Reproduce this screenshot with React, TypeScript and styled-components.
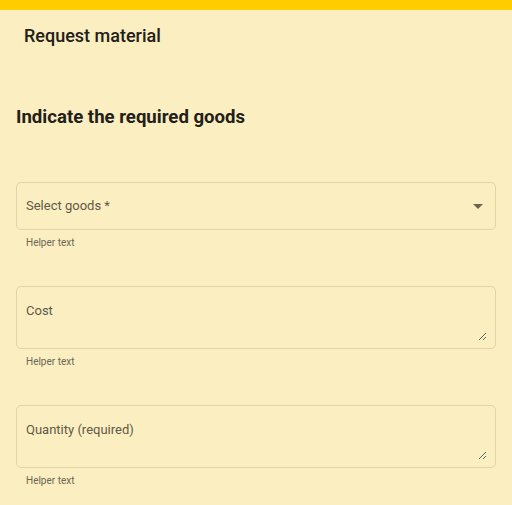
import React from "react";
import styled, { createGlobalStyle } from "styled-components";

const GlobalStyle = createGlobalStyle`
  html, body {
    margin: 0;
    padding: 0;
    background: #fbeec0;
    font-family: Roboto, "Noto Sans", "Liberation Sans", sans-serif;
  }
`;

interface FieldProps {
  label: string;
  helper: string;
}

const SelectField: React.FC<FieldProps> = ({ label, helper }) => (
  <FieldGroup>
    <SelectBox role="button" tabIndex={0}>
      <FieldLabel>{label}</FieldLabel>
      <svg width="10" height="5" viewBox="0 0 10 5">
        <path d="M0 0h10L5 5z" fill="#6b6552" />
      </svg>
    </SelectBox>
    <Helper>{helper}</Helper>
  </FieldGroup>
);

const TextField: React.FC<FieldProps> = ({ label, helper }) => (
  <FieldGroup>
    <TextBox>
      <TextArea placeholder={label} />
    </TextBox>
    <Helper>{helper}</Helper>
  </FieldGroup>
);

export default function App() {
  return (
    <>
      <GlobalStyle />
      <Page>
        <TopBar />
        <Title>Request material</Title>
        <Section>
          <Heading>Indicate the required goods</Heading>
          <Form>
            <SelectField label="Select goods *" helper="Helper text" />
            <TextField label="Cost" helper="Helper text" />
            <TextField label="Quantity (required)" helper="Helper text" />
          </Form>
        </Section>
      </Page>
    </>
  );
}

const Page = styled.div`
  display: flex;
  flex-direction: column;
  min-height: 505px;
  background: #fbeec0;
`;

const TopBar = styled.div`
  height: 10px;
  background: #ffcc00;
`;

const Title = styled.h1`
  margin: 0;
  padding: 14px 24px 0;
  font-size: 18px;
  font-weight: 500;
  line-height: 24px;
  color: #222018;
`;

const Section = styled.section`
  padding: 56px 16px 0;
`;

const Heading = styled.h2`
  margin: 0;
  font-size: 18.6px;
  font-weight: 700;
  line-height: 26px;
  color: #222018;
`;

const Form = styled.div`
  display: flex;
  flex-direction: column;
  gap: 37px;
  margin-top: 52px;
`;

const FieldGroup = styled.div`
  display: flex;
  flex-direction: column;
  gap: 6px;
`;

const SelectBox = styled.div`
  box-sizing: border-box;
  height: 48px;
  display: flex;
  align-items: center;
  justify-content: space-between;
  padding: 0 12px 0 9px;
  border: 1px solid #e1d4a6;
  border-radius: 5px;
  cursor: pointer;
`;

const FieldLabel = styled.span`
  font-size: 13px;
  line-height: 15px;
  margin-top: -2px;
  color: #5f5a48;
`;

const TextBox = styled.div`
  box-sizing: border-box;
  height: 63px;
  display: flex;
  padding: 8px 8px 7px 9px;
  border: 1px solid #e1d4a6;
  border-radius: 5px;
`;

const TextArea = styled.textarea`
  flex: 1;
  margin: 0;
  padding: 8px 0 0;
  border: none;
  background: transparent;
  font-family: Roboto, "Noto Sans", "Liberation Sans", sans-serif;
  font-size: 13px;
  line-height: 15px;
  color: #3a3628;
  outline: none;

  &::placeholder {
    color: #5f5a48;
    opacity: 1;
  }
`;

const Helper = styled.span`
  padding-left: 10px;
  font-size: 10px;
  line-height: 13px;
  color: #6b6656;
`;
